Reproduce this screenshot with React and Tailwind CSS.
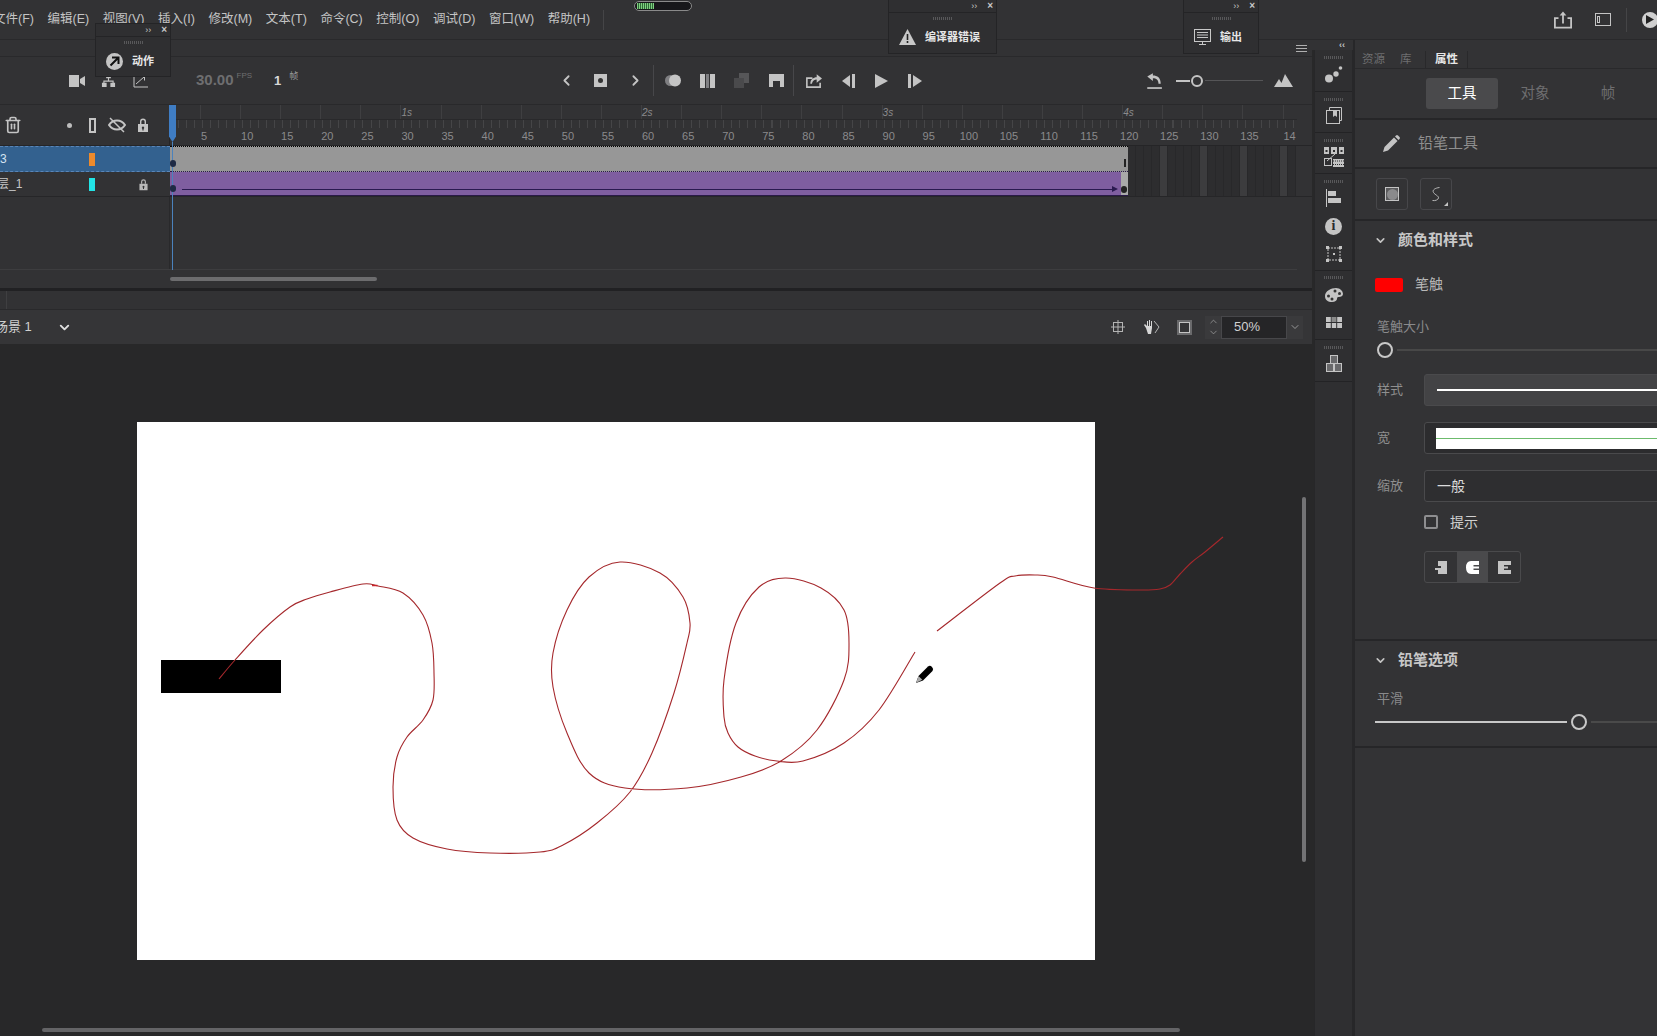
import React from 'react';
import { ChevronDown, ChevronLeft, ChevronRight, Trash2, ChevronUp } from 'lucide-react';

const menus = ['文件(F)', '编辑(E)', '视图(V)', '插入(I)', '修改(M)', '文本(T)', '命令(C)', '控制(O)', '调试(D)', '窗口(W)', '帮助(H)'];
const frameNumbers = Array.from({ length: 28 }, (_, i) => (i + 1) * 5);
const rulerCells = Array.from({ length: 28 }, (_, i) => i);
const secondLabels = { 5: '1s', 11: '2s', 17: '3s', 23: '4s' };
const emptyFrames = Array.from({ length: 21 }, (_, i) => i);

const strokeA = [
  [219, 679], [235, 660], [263, 630], [290, 607], [307, 599], [330, 592], [363, 584], [378, 586], [403, 593], [423, 615], [432, 643], [434, 673], [433, 700], [423, 720],
  [407, 737], [397, 757], [393, 787], [397, 820], [413, 838], [447, 849], [490, 853], [540, 852], [563, 845], [597, 823], [630, 792], [652, 753],
  [674, 693], [687, 643], [690, 623], [683, 597], [660, 573], [620, 562], [589, 577], [567, 610], [553, 653], [553, 687], [567, 733], [589, 773], [625, 788],
  [687, 788], [741, 777], [781, 761], [817, 730], [844, 680], [849, 643], [844, 610], [821, 588], [786, 578], [759, 587], [736, 623], [724, 680], [724, 717],
  [728, 733], [738, 747], [755, 756], [777, 761], [803, 761], [844, 743], [879, 710], [915, 652],
];
const strokeB = [[937, 631], [1000, 583], [1015, 576], [1035, 575], [1053, 577], [1094, 588], [1140, 590], [1160, 589], [1170, 585], [1180, 574], [1192, 562], [1205, 552], [1223, 537]];

const smoothPath = (pts) => {
  let d = `M${pts[0][0]} ${pts[0][1]}`;
  for (let i = 0; i < pts.length - 1; i++) {
    const p0 = pts[i - 1] || pts[i];
    const p1 = pts[i];
    const p2 = pts[i + 1];
    const p3 = pts[i + 2] || p2;
    d += ` C${p1[0] + (p2[0] - p0[0]) / 6} ${p1[1] + (p2[1] - p0[1]) / 6} ${p2[0] - (p3[0] - p1[0]) / 6} ${p2[1] - (p3[1] - p1[1]) / 6} ${p2[0]} ${p2[1]}`;
  }
  return d;
};

const Icon = ({ size = 16, children, className = '' }) => (
  <svg width={size} height={size} viewBox="0 0 16 16" fill="currentColor" className={className}>
    {children}
  </svg>
);

const Slot = ({ w = 'w-[33px]', children }) => <div className={`flex items-center justify-center ${w}`}>{children}</div>;

const Grip = () => <div className="mx-auto h-[3px] w-[19px] bg-[repeating-linear-gradient(90deg,#58585a_0_1px,transparent_1px_2px)]" />;

const FloatPanel = ({ className, icon, label }) => (
  <div className={`absolute border border-[#242426] bg-[#2f2f31] ${className}`}>
    <div className="flex h-[13px] items-center justify-end gap-[10px] border-b border-[#242426] pr-[3px] text-[#c8c8c8]">
      <span className="text-[9px] leading-none">››</span>
      <span className="text-[10px] font-bold leading-none">×</span>
    </div>
    <div className="mt-[4px]"><Grip /></div>
    <div className="mt-[9px] flex items-center gap-[9px] px-[10px]">
      {icon}
      <span className="text-[11px] font-bold text-[#e6e6e6]">{label}</span>
    </div>
  </div>
);

const LayerRow = ({ className, label, marker, lock }) => (
  <div className={`grid h-full grid-cols-[58px_22px_24px_26px_26px] items-center ${className}`}>
    <span className="-ml-[3px] whitespace-nowrap text-[12px] text-[#c8c8c8]">{label}</span>
    <span />
    <span className={`mx-auto h-[13px] w-[6px] ${marker}`} />
    <span />
    <span className="flex justify-center text-[#b8b8b8]">{lock}</span>
  </div>
);

const LockIcon = ({ size = 14 }) => (
  <Icon size={size}>
    <path d="M3 7h10v8H3z M8 9.5a1.3 1.3 0 0 0-.6 2.4V13.5h1.2V11.9A1.3 1.3 0 0 0 8 9.5z" fillRule="evenodd" />
    <path d="M5 7V4.6a3 3 0 0 1 6 0V7H9.6V4.6a1.6 1.6 0 0 0-3.2 0V7z" />
  </Icon>
);

const EmptyCells = () => (
  <div className="flex h-full flex-1">
    {emptyFrames.map((i) => (
      <div key={i} className={`h-full w-[8px] border-r border-[#28282a] ${i % 5 === 4 ? 'bg-[#3c3c3e]' : 'bg-[#2d2d2f]'}`} />
    ))}
  </div>
);

const Section = ({ title, children, className = '' }) => (
  <div className={`border-b-2 border-[#262628] ${className}`}>
    <div className="flex h-[38px] items-center gap-[11px] pl-[19px]">
      <ChevronDown size={13} strokeWidth={3} className="text-[#c4c4c4]" />
      <span className="text-[15px] font-bold text-[#c8c8c8]">{title}</span>
    </div>
    {children}
  </div>
);

const FieldRow = ({ label, className = '', children }) => (
  <div className={`flex h-[32px] items-center ${className}`}>
    <span className="w-[69px] shrink-0 pl-[22px] text-[13px] text-[#8f8f8f]">{label}</span>
    {children}
  </div>
);

const App = () => {
  return (
    <div className="relative flex h-[1036px] w-[1657px] flex-col overflow-hidden bg-[#323234] font-['Liberation_Sans','Noto_Sans_CJK_SC',sans-serif] text-[#c8c8c8]">
      {/* menu bar */}
      <header className="flex h-[40px] shrink-0 items-center border-b border-[#29292b]">
        <nav className="-ml-[7px] flex gap-[13.6px] text-[12.5px] text-[#c4c4c4]">
          {menus.map((m) => <span key={m} className="whitespace-nowrap">{m}</span>)}
        </nav>
        <div className="ml-[13px] h-[20px] w-px bg-[#454547]" />
        <div className="ml-[30px] mb-[28px] flex h-[10px] w-[58px] items-center overflow-hidden rounded-full border border-[#8a8a8a] bg-[#17171a] pl-[2px]">
          <div className="h-[6px] w-[17px] bg-[repeating-linear-gradient(90deg,#7fd07f_0_1px,#2f6a38_1px_2px)]" />
        </div>
        <div className="ml-auto flex items-center text-[#c4c4c4]">
          <Slot w="w-[40px]">
            <Icon size={18}><path d="M1 6h4v1.5H2.6v6.9h12.8V7.5H13V6h4v10H1z" transform="translate(-1 -0.5)" /><path d="M7.2 11V4H5l3-3.5L11 4H8.8v7z" /></Icon>
          </Slot>
          <Slot w="w-[40px]">
            <svg width="16" height="13" viewBox="0 0 16 13" fill="none" stroke="currentColor"><rect x="0.5" y="0.5" width="15" height="12" /><rect x="2.5" y="3.5" width="2" height="6" /></svg>
          </Slot>
          <div className="ml-[3px] mr-[15px] h-[24px] w-px bg-[#454547]" />
          <div className="-mr-[1px] flex h-[16px] w-[16px] items-center justify-center rounded-full bg-[#d0d0d0]">
            <svg width="8" height="9" viewBox="0 0 8 9"><path d="M0 0l8 4.5L0 9z" fill="#222" /></svg>
          </div>
        </div>
      </header>

      <div className="flex min-h-0 flex-1">
        {/* timeline and stage */}
        <main className="flex w-[1312px] shrink-0 flex-col">
          <div className="flex h-[17px] shrink-0 items-center justify-end border-b border-[#29292b] pr-[5px]">
            <div className="h-[7px] w-[11px] bg-[repeating-linear-gradient(180deg,#b0b0b0_0_1px,transparent_1px_3px)]" />
          </div>

          <div className="flex h-[48px] shrink-0 items-center border-b border-[#29292b] text-[#c4c4c4]">
            <div className="ml-[60px] flex">
              <Slot>
                <svg width="16" height="12" viewBox="0 0 16 12" fill="currentColor"><rect width="10" height="12" /><path d="M11 4l5-3v10l-5-3z" /></svg>
              </Slot>
              <Slot w="w-[30px]">
                <Icon size={15}><path d="M5.5 1h5v4.5h-5z M7.4 5.5h1.2v2.5H13.5v2.5h-1.2V9.2H3.7v1.3H2.5V8h4.9z M1 10.5h5V15H1z M10 10.5h5V15h-5z" /></Icon>
              </Slot>
              <Slot w="w-[34px]">
                <svg width="15" height="14" viewBox="0 0 15 14" fill="none" stroke="currentColor"><path d="M1 0v13h14" /><path d="M3 10l8-7M7.5 2.5H11.5V6.5" /></svg>
              </Slot>
            </div>
            <span className="ml-[39px] text-[15px] font-bold text-[#6e6e70]">30.00</span>
            <span className="mb-[10px] ml-[3px] text-[8px] text-[#6e6e70]">FPS</span>
            <span className="ml-[22px] text-[13px] font-bold text-[#d8d8d8]">1</span>
            <span className="mb-[8px] ml-[8px] text-[9px] text-[#9a9a9a]">帧</span>
            <div className="ml-[252px] flex items-center">
              <Slot><ChevronLeft size={17} strokeWidth={2.5} /></Slot>
              <Slot w="w-[35px]">
                <div className="flex h-[13px] w-[13px] items-center justify-center bg-[#c4c4c4]"><div className="h-[5px] w-[5px] rounded-full bg-[#333]" /></div>
              </Slot>
              <Slot w="w-[34px]"><ChevronRight size={17} strokeWidth={2.5} /></Slot>
              <div className="ml-[1px] h-[31px] w-px bg-[#47474a]" />
              <Slot w="w-[37px]">
                <svg width="16" height="13" viewBox="0 0 16 13"><circle cx="5.5" cy="6.5" r="5.5" fill="#7f7f82" /><circle cx="10" cy="6.5" r="6" fill="#c4c4c4" /></svg>
              </Slot>
              <Slot w="w-[33px]">
                <svg width="15" height="14" viewBox="0 0 15 14" fill="currentColor"><rect width="5" height="14" /><rect x="6" width="3" height="14" fill="#7f7f82" /><rect x="10" width="5" height="14" /></svg>
              </Slot>
              <Slot w="w-[35px]">
                <svg width="15" height="15" viewBox="0 0 15 15" fill="#565658"><rect x="5" width="10" height="10" /><rect y="5" width="10" height="10" fill="#4a4a4c" /></svg>
              </Slot>
              <Slot w="w-[34px]">
                <svg width="15" height="13" viewBox="0 0 15 13" fill="currentColor"><path d="M0 0h15v13h-4V7H4v6H0z" /></svg>
              </Slot>
              <div className="h-[31px] w-px bg-[#47474a]" />
              <Slot w="w-[38px]">
                <Icon size={17}><path d="M1 5h6v1.5H2.5v7h11V10H15v5H1z" /><path d="M5 11c0-4 3-6 6-6V2l5 4-5 4V7c-2 0-4 1-4.5 4z" /></Icon>
              </Slot>
              <Slot>
                <svg width="14" height="14" viewBox="0 0 14 14" fill="currentColor"><path d="M8 1v12L0 7z" /><rect x="10" y="0" width="3" height="14" /></svg>
              </Slot>
              <Slot>
                <svg width="13" height="14" viewBox="0 0 13 14" fill="currentColor"><path d="M0 0l13 7-13 7z" /></svg>
              </Slot>
              <Slot w="w-[34px]">
                <svg width="14" height="14" viewBox="0 0 14 14" fill="currentColor"><rect x="0" y="0" width="3" height="14" /><path d="M5 1v12l9-6z" /></svg>
              </Slot>
            </div>
            <div className="ml-[213px] flex items-center">
              <Icon size={18}><path d="M3 14.5h13V16H3z" transform="translate(-1 -1)" /><path d="M2 4l5-3v2.2c4 0 7 2 7 7.3h-2c0-3.6-2-5-5-5V8z" /></Icon>
              <div className="ml-[13px] h-[2px] w-[14px] bg-[#c4c4c4]" />
              <div className="ml-[1px] h-[12px] w-[12px] rounded-full border-2 border-[#c4c4c4]" />
              <div className="ml-[2px] h-[1px] w-[58px] bg-[#555557]" />
              <svg width="19" height="13" viewBox="0 0 19 13" fill="currentColor" className="ml-[11px]"><path d="M0 13l5-8 2.5 4L11 0l8 13z" /></svg>
            </div>
          </div>

          {/* timeline */}
          <div className="relative flex h-[183px] shrink-0 flex-col">
            <div className="flex h-[41px] shrink-0 border-b border-[#252527]">
              <div className="grid w-[170px] shrink-0 grid-cols-[58px_22px_24px_26px_26px] items-center border-r border-[#252527] text-[#c4c4c4]">
                <Trash2 size={18} strokeWidth={2.2} className="ml-[4px]" />
                <span className="mx-auto h-[5px] w-[5px] rounded-full bg-[#bdbdbd]" />
                <span className="mx-auto h-[15px] w-[7px] border-2 border-[#c4c4c4]" />
                <span className="flex justify-center">
                  <svg width="18" height="16" viewBox="0 0 18 16" fill="none" stroke="currentColor" strokeWidth="2"><path d="M1 8c4-6 12-6 16 0-4 6-12 6-16 0z" /><path d="M2 1l14 14" strokeWidth="1.5" /></svg>
                </span>
                <span className="flex justify-center"><LockIcon size={16} /></span>
              </div>
              <div className="flex w-[1127px] flex-col overflow-hidden">
                <div className="flex h-[15px] border-b border-[#29292b] pl-[30px] text-[10px] italic text-[#8a8a8c]">
                  {rulerCells.map((i) => (
                    <div key={i} className="h-full w-[40.1px] shrink-0 border-l border-[#3f3f41] pl-0 leading-[15px]">{secondLabels[i]}</div>
                  ))}
                </div>
                <div className="h-[8px] bg-[repeating-linear-gradient(90deg,#454547_0_1px,transparent_1px_8.02px)]" />
                <div className="flex pl-[17px]">
                  {frameNumbers.map((n) => (
                    <span key={n} className={`w-[40.1px] shrink-0 text-center text-[11px] leading-[17px] text-[#8a8a8c] ${n === 5 ? 'pr-[6px]' : ''}`}>{n === 140 ? '14' : n}</span>
                  ))}
                </div>
              </div>
            </div>

            <div className="flex h-[26px] shrink-0">
              <div className="w-[170px] shrink-0 border-y border-[#5a86b8] border-dashed bg-[#33618f]">
                <LayerRow label={<span className="ml-[3px] text-[#d6e4f2]">3</span>} marker="bg-[#ec8a2c]" />
              </div>
              <div className="flex w-[1127px]">
                <div className="relative h-full w-[958px] border-t border-dotted border-t-black border-b border-b-[#2a1a48] bg-[#979797]">
                  <div className="absolute right-[2px] top-[12px] h-[8px] w-[2px] bg-[#222]" />
                </div>
                <EmptyCells />
              </div>
            </div>

            <div className="flex h-[25px] shrink-0 border-b border-[#262628]">
              <div className="w-[170px] shrink-0">
                <LayerRow label="层_1" marker="bg-[#22e4e6]" lock={<LockIcon size={13} />} />
              </div>
              <div className="flex w-[1127px]">
                <div className="relative flex h-full w-[958px] border-b border-[#2a1a48]">
                  <div className="h-full w-[951px] bg-[#7f5ea0]" />
                  <div className="h-full flex-1 bg-[#a9a9a9]" />
                  <div className="absolute left-[12px] top-[17px] h-px w-[934px] bg-[#2a1a50]" />
                  <div className="absolute left-[942px] top-[14px] h-0 w-0 border-y-[3.5px] border-l-[6px] border-y-transparent border-l-[#2a1a50]" />
                  <div className="absolute left-[951px] top-[14px] h-[7px] w-[6px] rounded-full bg-[#222]" />
                </div>
                <EmptyCells />
              </div>
            </div>

            <div className="mr-[15px] flex h-[73px] shrink-0 border-b border-[#3d3d3f]">
              <div className="w-[170px] shrink-0 border-r border-[#29292b]" />
            </div>
            <div className="flex flex-1 items-center pl-[170px]">
              <div className="h-[4px] w-[207px] rounded-full bg-[#6c6c6e]" />
            </div>

            {/* playhead */}
            <div className="absolute left-[169px] top-0 h-[37px] w-[7px] bg-[#3f7dc4] [clip-path:polygon(0_0,100%_0,100%_85%,50%_100%,0_85%)]" />
            <div className="absolute left-[172px] top-[37px] h-[128px] w-px bg-[#4b82bc]" />
            <div className="absolute left-[169.5px] top-[55px] h-[7px] w-[6px] rounded-full bg-[#1f2a44]" />
            <div className="absolute left-[169.5px] top-[80px] h-[7px] w-[6px] rounded-full bg-[#1f2a44]" />
          </div>

          <div className="h-[3px] shrink-0 bg-[#212123]" />
          <div className="flex h-[19px] shrink-0 border-b border-[#29292b]">
            <div className="w-[7px] border-r border-[#3f3f41]" />
          </div>

          <div className="flex h-[34px] shrink-0 items-center bg-[#353537]">
            <span className="-ml-[5px] whitespace-nowrap text-[13px] text-[#d0d0d0]">场景 1</span>
            <ChevronDown size={15} strokeWidth={3} className="ml-[25px] text-[#e0e0e0]" />
            <div className="ml-auto flex items-center text-[#b4b4b4]">
              <Slot w="w-[32px]">
                <svg width="14" height="14" viewBox="0 0 14 14" fill="none" stroke="currentColor"><rect x="2.5" y="2.5" width="9" height="9" /><path d="M7 0v14M0 7h14" /></svg>
              </Slot>
              <Slot w="w-[34px]">
                <svg width="18" height="17" viewBox="0 0 18 17" fill="currentColor"><path d="M4 9l-2-3 1-1 2 2V2h1v5h1V1h1v6h1V2h1v7l-1 6H6z" fill="#d6d6d6" /><path d="M12 2l5 6-4 6" fill="none" stroke="currentColor" /></svg>
              </Slot>
              <Slot w="w-[32px]">
                <svg width="15" height="15" viewBox="0 0 15 15" fill="none"><rect width="15" height="15" fill="#6a6a6c" /><rect x="2.5" y="2.5" width="10" height="10" fill="#353537" stroke="#c4c4c4" /></svg>
              </Slot>
              <div className="ml-[5px] flex h-[23px] w-[16px] flex-col items-center justify-center bg-[#3a3a3c] text-[#a8a8a8]">
                <ChevronUp size={11} strokeWidth={1.5} />
                <ChevronDown size={11} strokeWidth={1.5} />
              </div>
              <div className="flex h-[23px] w-[66px] items-center justify-center border border-[#47474a] bg-[#252527] pr-[14px] text-[13px] text-[#d0d0d0]">50%</div>
              <div className="flex h-[23px] w-[16px] items-center justify-center bg-[#3a3a3c]">
                <ChevronDown size={12} strokeWidth={1.5} />
              </div>
              <div className="w-[9px]" />
            </div>
          </div>

          {/* stage */}
          <div className="relative min-h-0 flex-1 overflow-hidden bg-[#282829] pl-[137px] pt-[78px]">
            <div className="relative h-[538px] w-[958px] bg-white">
              <div className="absolute left-[24px] top-[238px] h-[33px] w-[120px] bg-black" />
            </div>
            <svg width="1312" height="692" viewBox="0 344 1312 692" fill="none" className="absolute left-0 top-0">
              <path d={smoothPath(strokeA)} stroke="#a5282c" strokeWidth="1.1" />
              <path d={smoothPath(strokeB)} stroke="#a5282c" strokeWidth="1.1" />
              <path d="M372 585.500h5.500" stroke="#c8252a" strokeWidth="1.500" />
              <path d="M916 683l2.5-7 9.5-9.5q2-1.5 4 .5t.5 4l-9.500 9.500z" fill="#000" />
              <path d="M918.500 676l3.800 3.800-6.300 3.200z" fill="#aaa" />
            </svg>
            <div className="absolute right-[6px] top-[153px] h-[365px] w-[4px] rounded-full bg-[#737375]" />
            <div className="absolute bottom-[4px] left-[42px] h-[4px] w-[1138px] rounded-full bg-[#646466]" />
          </div>
        </main>

        {/* icon dock */}
        <aside className="flex w-[43px] shrink-0 flex-col border-r-2 border-[#272729] bg-[#282829]">
          <div className="flex h-[10px] shrink-0 items-center justify-end bg-[#323234] pr-[8px] text-[9px] font-bold leading-none text-[#c4c4c4]">‹‹</div>
          <div className="ml-[2px] flex-1 border-x border-[#272729] bg-[#2f2f31] text-[#c4c4c4]">
            <div className="h-[42px] border-b border-[#232325] pt-[6px]">
              <Grip />
              <div className="flex h-[28px] items-center justify-center pt-[1px]">
                <svg width="18" height="18" viewBox="0 0 18 18" fill="currentColor"><circle cx="4" cy="13.500" r="4" /><circle cx="11" cy="9" r="2.700" /><circle cx="15.500" cy="3" r="1.800" /></svg>
              </div>
            </div>
            <div className="h-[41px] border-b border-[#232325] pt-[6px]">
              <Grip />
              <div className="flex h-[28px] items-center justify-center">
                <svg width="16" height="17" viewBox="0 0 16 17" fill="none" stroke="currentColor"><rect x="0.500" y="3.500" width="13" height="13" /><path d="M3.500 3.500v-3h12v13h-2" /><path d="M7 4v6l2-1.500L11 10V4z" fill="currentColor" stroke="none" /></svg>
              </div>
            </div>
            <div className="h-[41px] border-b border-[#232325] pt-[6px]">
              <Grip />
              <div className="mt-[1px] flex h-[28px] items-center justify-center">
                <svg width="20" height="20" viewBox="0 0 20 20" fill="currentColor"><path fillRule="evenodd" d="M0 0h5v7H0z M7 0h6v7H7z M15 0h5v7h-5z M1.500 3v2h2V3z M9 3v2h2V3z M16.500 3v2h2V3z" /><rect x="0.500" y="11.500" width="7" height="7" fill="none" stroke="currentColor" /><path d="M3 14l8-7" stroke="currentColor" fill="none" /><rect x="9" y="12" width="11" height="8" /><path d="M9 14h11M9 17.500h11" stroke="#2f2f31" strokeDasharray="1 1" fill="none" /></svg>
              </div>
            </div>
            <div className="h-[97px] border-b border-[#232325] pt-[6px]">
              <Grip />
              <div className="mt-[1px] flex h-[28px] items-center justify-center">
                <svg width="16" height="18" viewBox="0 0 16 18" fill="currentColor"><rect width="1" height="18" /><rect x="2" y="2" width="8" height="5" /><rect x="2" y="9" width="13" height="5" /></svg>
              </div>
              <div className="flex h-[28px] items-center justify-center">
                <div className="flex h-[17px] w-[17px] items-center justify-center rounded-full bg-[#c4c4c4] font-['Liberation_Serif',serif] text-[14px] font-bold leading-none text-[#2a2a2c]">i</div>
              </div>
              <div className="flex h-[28px] items-center justify-center">
                <svg width="16" height="16" viewBox="0 0 16 16" fill="currentColor"><path d="M2 2h12v12H2z" fill="none" stroke="currentColor" strokeDasharray="2 1" /><rect width="3" height="3" /><rect x="13" width="3" height="3" /><rect y="13" width="3" height="3" /><rect x="13" y="13" width="3" height="3" /><rect x="7" y="7" width="2" height="2" /></svg>
              </div>
            </div>
            <div className="h-[69px] border-b border-[#232325] pt-[5px]">
              <Grip />
              <div className="mt-[1px] flex h-[28px] items-center justify-center">
                <svg width="19" height="15" viewBox="0 0 19 15"><path d="M1 9c0-5 6-8 11-8 4 0 7 3 7 6 0 2-2 3-4 3-1 0-2 0-2 2 0 1-2 3-5 3-4 0-7-2-7-6z" fill="#c4c4c4" /><circle cx="4.500" cy="9" r="1.500" fill="#333" /><circle cx="8" cy="12" r="1.500" fill="#333" /><circle cx="11" cy="4" r="1.500" fill="#333" /><circle cx="15.500" cy="6.500" r="1.500" fill="#333" /></svg>
              </div>
              <div className="flex h-[28px] items-center justify-center">
                <svg width="16" height="11" viewBox="0 0 16 11"><rect width="16" height="11" fill="#c4c4c4" /><path d="M0 5.500h16M5.300 0v11M10.700 0v11" stroke="#2f2f31" /><rect x="5.800" y="0" width="4.400" height="5" fill="#8a8a8a" /></svg>
              </div>
            </div>
            <div className="h-[42px] border-b border-[#232325] pt-[6px]">
              <Grip />
              <div className="flex h-[28px] items-center justify-center">
                <svg width="16" height="17" viewBox="0 0 16 17" fill="#69696b" stroke="#c4c4c4"><rect x="4.500" y="0.500" width="7" height="8" /><rect x="0.500" y="8.500" width="7" height="8" /><rect x="8.500" y="8.500" width="7" height="8" /></svg>
              </div>
            </div>
          </div>
        </aside>

        {/* properties panel */}
        <aside className="flex-1 overflow-hidden bg-[#333335]">
          <div className="h-[11px]" />
          <div className="flex h-[18px] items-end border-b border-[#29292b] pl-[7px] text-[11.500px] leading-[17px]">
            <span className="w-[38px] text-[#6e6e70]">资源</span>
            <span className="w-[25px] text-[#6e6e70]">库</span>
            <span className="border-x border-[#29292b] px-[9px] font-bold text-[#e8e8e8]">属性</span>
          </div>
          <div className="flex h-[51px] items-center border-b-2 border-[#262628] pl-[71px]">
            <div className="flex h-[31px] w-[72px] items-center justify-center rounded-[3px] bg-[#4a4a4c] text-[14.500px] text-white">工具</div>
            <div className="w-[74px] text-center text-[14.500px] text-[#6e6e70]">对象</div>
            <div className="w-[72px] text-center text-[14.500px] text-[#6e6e70]">帧</div>
          </div>
          <div className="flex h-[49px] items-center border-b-2 border-[#262628] pl-[28px]">
            <svg width="17" height="17" viewBox="0 0 17 17" fill="#c4c4c4"><path d="M0 17l1.500-5L11 2.500l3.500 3.500L5 15.500z" /><path d="M12 1.500l1-1q1-.8 2 0l1.500 1.500q.8 1 0 2l-1 1z" /></svg>
            <span className="ml-[18px] text-[15px] text-[#8f8f8f]">铅笔工具</span>
          </div>
          <div className="flex h-[52px] items-center gap-[12px] border-b-2 border-[#262628] pl-[21px]">
            <div className="flex h-[32px] w-[32px] items-center justify-center rounded-[3px] border border-[#47474a]">
              <div className="flex h-[14px] w-[14px] items-center justify-center border border-[#c4c4c4] bg-[#5a5a5c]"><div className="h-[11px] w-[11px] rounded-full bg-[#8a8a8c]" /></div>
            </div>
            <div className="relative flex h-[32px] w-[32px] items-center justify-center rounded-[3px] border border-[#47474a]">
              <svg width="10" height="16" viewBox="0 0 10 16" fill="none" stroke="#b8b8b8"><path d="M8.500 1.500C4 2 1 4 2.500 6.500S8 10 7.500 12 4 15 1.500 14.500" /></svg>
              <div className="absolute bottom-[3px] right-[3px] h-0 w-0 border-b-[4px] border-l-[4px] border-b-[#c4c4c4] border-l-transparent" />
            </div>
          </div>

          <Section title="颜色和样式" className="h-[420px]">
            <div className="mt-[17px] flex h-[17px] items-center pl-[20px]">
              <div className="h-[14px] w-[28px] rounded-[2px] bg-[#ff0000]" />
              <span className="ml-[12px] text-[14px] text-[#b8b8b8]">笔触</span>
            </div>
            <div className="mt-[25px] pl-[22px] text-[13px] leading-[17px] text-[#8a8a8c]">笔触大小</div>
            <div className="mt-[6px] flex h-[18px] items-center pl-[22px]">
              <div className="h-[16px] w-[16px] shrink-0 rounded-full border-2 border-[#c8c8c8]" />
              <div className="ml-[4px] h-[2px] w-[300px] shrink-0 bg-[#484848]" />
            </div>
            <FieldRow label="样式" className="mt-[15px]">
              <div className="flex h-[32px] w-[300px] shrink-0 items-center rounded-[3px] border border-[#4a4a4c] bg-[#434345] pl-[12px]">
                <div className="h-[2px] w-full bg-white" />
              </div>
            </FieldRow>
            <FieldRow label="宽" className="mt-[16px]">
              <div className="flex h-[32px] w-[300px] shrink-0 items-center rounded-[3px] border border-[#4a4a4c] bg-[#2c2c2e] pl-[11px]">
                <div className="flex h-[21px] w-full items-center bg-white"><div className="h-px w-full bg-[#6cbb6c]" /></div>
              </div>
            </FieldRow>
            <FieldRow label="缩放" className="mt-[16px]">
              <div className="flex h-[32px] w-[300px] shrink-0 items-center rounded-[3px] border border-[#4a4a4c] bg-[#2e2e30] pl-[12px] text-[14px] text-[#dcdcdc]">一般</div>
            </FieldRow>
            <div className="ml-[69px] mt-[13px] flex h-[14px] items-center gap-[12px]">
              <div className="h-[14px] w-[14px] rounded-[2px] border-2 border-[#8e8e90]" />
              <span className="text-[14px] text-[#d0d0d0]">提示</span>
            </div>
            <div className="ml-[69px] mt-[22px] flex h-[32px] w-[97px] overflow-hidden rounded-[3px] border border-[#4a4a4c]">
              <div className="flex flex-1 items-center justify-center">
                <svg width="13" height="13" viewBox="0 0 13 13" fill="#c4c4c4"><path d="M4 0h9v13H4v-4H1V7h6V5H4z" /></svg>
              </div>
              <div className="flex flex-1 items-center justify-center bg-[#4a4a4c]">
                <svg width="13" height="13" viewBox="0 0 13 13" fill="#fff"><path d="M5 0h8v4H7.500v1.500H13v2H7.500V9H13v4H5Q0 13 0 6.500T5 0z" /></svg>
              </div>
              <div className="flex flex-1 items-center justify-center">
                <svg width="13" height="13" viewBox="0 0 13 13" fill="#c4c4c4"><path d="M0 0h13v4H6v1.500h4v2H6V9h7v4H0z" /></svg>
              </div>
            </div>
          </Section>

          <Section title="铅笔选项" className="h-[107px]">
            <div className="mt-[11px] pl-[22px] text-[13px] leading-[17px] text-[#8a8a8c]">平滑</div>
            <div className="mt-[6px] flex h-[18px] items-center pl-[20px]">
              <div className="h-[2px] w-[192px] shrink-0 bg-[#c8c8c8]" />
              <div className="ml-[4px] h-[16px] w-[16px] shrink-0 rounded-full border-2 border-[#c8c8c8]" />
              <div className="ml-[4px] h-[2px] w-[100px] shrink-0 bg-[#4a4a4a]" />
            </div>
          </Section>
        </aside>
      </div>

      <FloatPanel
        className="left-[95px] top-[23px] h-[54px] w-[76px]"
        icon={
          <div className="flex h-[17px] w-[17px] shrink-0 items-center justify-center rounded-full bg-[#c4c4c4]">
            <svg width="11" height="11" viewBox="0 0 11 11" fill="none" stroke="#111" strokeWidth="2"><path d="M1.500 9.500L9 2M3 1.500h6.500V8" /></svg>
          </div>
        }
        label="动作"
      />
      <FloatPanel
        className="left-[888px] -top-px h-[55px] w-[109px]"
        icon={
          <svg width="17" height="16" viewBox="0 0 17 16" className="shrink-0"><path d="M8.500 0L17 16H0z" fill="#c8c8c8" /><path d="M7.700 5h1.600v6H7.700zM7.700 12h1.600v2H7.700z" fill="#222" /></svg>
        }
        label="编译器错误"
      />
      <FloatPanel
        className="left-[1183px] -top-px h-[55px] w-[76px]"
        icon={
          <svg width="17" height="17" viewBox="0 0 17 17" fill="none" stroke="#c8c8c8" className="shrink-0"><rect x="0.500" y="0.500" width="16" height="12" /><path d="M3 3.500h11M3 6h11M3 8.500h11M8.500 13v2M5 15.500h7" /></svg>
        }
        label="输出"
      />
    </div>
  );
};

export default App;
